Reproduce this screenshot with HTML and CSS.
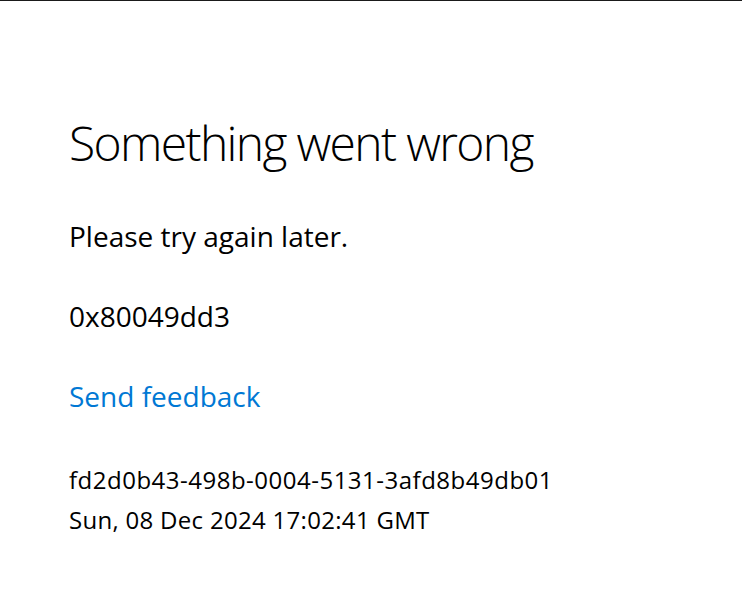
FILE: index.html
```html
<!DOCTYPE html>
<html lang="en">
<head>
<meta charset="utf-8">
<title>Something went wrong</title>
<link rel="stylesheet" href="styles.css">
</head>
<body>
<div class="page">
  <main class="content">
    <h1 class="title">Something went wrong</h1>
    <p class="message">Please try again later.</p>
    <p class="code">0x80049dd3</p>
    <a class="feedback" href="#">Send feedback</a>
    <div class="details">
      <div class="detail detail-id">fd2d0b43-498b-0004-5131-3afd8b49db01</div>
      <div class="detail">Sun, 08 Dec 2024 17:02:41 GMT</div>
    </div>
  </main>
</div>
</body>
</html>
```
FILE: styles.css
```css
html, body {
  margin: 0;
  padding: 0;
  background: #ffffff;
}
body {
  font-family: "Open Sans", "Noto Sans", sans-serif;
  color: #000000;
}
.page {
  border-top: 1px solid #1a1a1a;
  min-height: 614px;
  box-sizing: border-box;
}
.content {
  padding: 112px 0 0 69px;
  display: flex;
  flex-direction: column;
  align-items: flex-start;
}
.title {
  margin: 0;
  font-size: 48px;
  font-weight: 300;
  line-height: 60px;
  letter-spacing: -1.65px;
}
.message {
  margin: 47px 0 0;
  font-size: 28px;
  line-height: 32px;
}
.code {
  margin: 48px 0 0;
  font-size: 28px;
  line-height: 32px;
}
.feedback {
  margin-top: 48px;
  font-size: 28px;
  line-height: 32px;
  color: #0078d4;
  text-decoration: none;
}
.details {
  margin-top: 50px;
  display: flex;
  flex-direction: column;
  gap: 4px;
}
.detail {
  font-size: 24px;
  line-height: 36px;
  letter-spacing: 0.3px;
}
.detail-id {
  letter-spacing: 0.5px;
}
```
